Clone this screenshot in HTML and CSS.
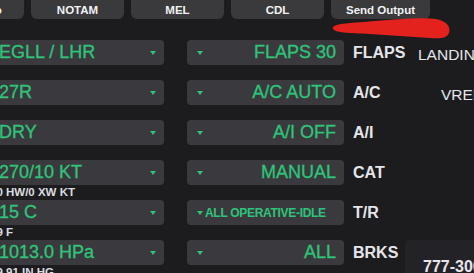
FILE: index.html
```html
<!DOCTYPE html>
<html>

<head>
  <meta charset="utf-8">
  <title>takeoff setup</title>
  <link rel="stylesheet" href="styles.css">
</head>

<body>
  <div class="toolbar">
    <button class="tab">Scenario</button>
    <button class="tab">NOTAM</button>
    <button class="tab">MEL</button>
    <button class="tab">CDL</button>
    <button class="tab wide">Send Output</button>
  </div>

  <!-- red marker scribble over the screenshot -->
  <svg class="scribble" width="124" height="26" viewBox="0 0 124 26">
    <path d="M3,11 C3,6 25,6 45,4 C70,2 92,0 106,2 C117,4 121,10 119,16 C117,21 110,22 100,21 C80,20 60,18 40,17 C20,16 3,16 3,11 Z" fill="#e3211d"/>
  </svg>

  <div class="main">
    <div class="form">
      <div class="row">
        <div class="cell">
          <div class="field left"><span class="value">EGLL / LHR</span><i class="caret"></i></div>
        </div>
        <div class="field right"><i class="caret"></i><span class="value">FLAPS 30</span></div>
        <span class="label">FLAPS</span>
      </div>
      <div class="row">
        <div class="cell">
          <div class="field left"><span class="value">27R</span><i class="caret"></i></div>
        </div>
        <div class="field right"><i class="caret"></i><span class="value">A/C AUTO</span></div>
        <span class="label">A/C</span>
      </div>
      <div class="row">
        <div class="cell">
          <div class="field left"><span class="value">DRY</span><i class="caret"></i></div>
        </div>
        <div class="field right"><i class="caret"></i><span class="value">A/I OFF</span></div>
        <span class="label">A/I</span>
      </div>
      <div class="row">
        <div class="cell">
          <div class="field left"><span class="value">270/10 KT</span><i class="caret"></i></div>
          <div class="sub">10 HW/0 XW KT</div>
        </div>
        <div class="field right"><i class="caret"></i><span class="value">MANUAL</span></div>
        <span class="label">CAT</span>
      </div>
      <div class="row">
        <div class="cell">
          <div class="field left"><span class="value">15 C</span><i class="caret"></i></div>
          <div class="sub">59 F</div>
        </div>
        <div class="field right small"><i class="caret"></i><span class="value">ALL OPERATIVE-IDLE</span></div>
        <span class="label">T/R</span>
      </div>
      <div class="row">
        <div class="cell">
          <div class="field left"><span class="value">1013.0 HPa</span><i class="caret"></i></div>
          <div class="sub">29.91 IN HG</div>
        </div>
        <div class="field right"><i class="caret"></i><span class="value">ALL</span></div>
        <span class="label">BRKS</span>
      </div>
    </div>

    <div class="side">
      <div class="side-title">LANDING</div>
      <div class="side-item">VREF</div>
      <div class="model">777-300ER</div>
    </div>
  </div>
</body>

</html>
```

FILE: styles.css
```css
html {
  --bg: #1c1c1f;
  --field: #3a3a3e;
  --green: #2fc47a;
  --text: #e6e6ea;
}

body {
  margin: 0;
  width: 474px;
  height: 273px;
  overflow: hidden;
  position: relative;
  background: var(--bg);
  font-family: "Liberation Sans", Arial, sans-serif;
  color: var(--text);
}

.toolbar {
  display: flex;
  gap: 7px;
  margin: -8px 0 0 -69px;
}

.tab {
  flex: 0 0 93px;
  height: 27px;
  box-sizing: border-box;
  padding: 9px 0 0;
  border: 0;
  border-radius: 6px;
  background: #3a3a3d;
  color: #f2f2f4;
  font-family: inherit;
  font-size: 11.5px;
  font-weight: bold;
  line-height: 14px;
  text-align: center;
  white-space: nowrap;
}

.tab.wide {
  flex-basis: 99px;
}

.scribble {
  position: absolute;
  left: 330px;
  top: 17px;
}

.main {
  display: flex;
  height: 254px;
}

.form {
  flex: none;
  width: 405px;
  padding-top: 21px;
}

.row {
  display: flex;
  align-items: flex-start;
  height: 40px;
}

.cell {
  width: 176px;
  margin-left: -12px;
}

.field {
  display: flex;
  align-items: center;
  justify-content: space-between;
  height: 25px;
  box-sizing: border-box;
  border-radius: 4px;
  background: var(--field);
  color: var(--green);
  font-size: 18px;
  -webkit-text-stroke: 0.3px var(--green);
  white-space: nowrap;
}

.field.left {
  padding: 0 8px 0 11px;
}

.field.right {
  width: 157px;
  margin-left: 23px;
  padding: 0 8px 0 10px;
}

.field.small {
  justify-content: flex-start;
  gap: 2px;
  font-size: 12px;
  font-weight: bold;
  letter-spacing: -0.3px;
  -webkit-text-stroke: 0;
}

.caret {
  width: 0;
  height: 0;
  border-left: 3.5px solid transparent;
  border-right: 3.5px solid transparent;
  border-top: 4.5px solid var(--green);
}

.sub {
  padding-left: 2px;
  font-size: 11.5px;
  font-weight: bold;
  line-height: 14px;
  color: #dcdce0;
  white-space: nowrap;
}

.label {
  width: 52px;
  margin-left: 9px;
  font-size: 16px;
  font-weight: bold;
  line-height: 25px;
  white-space: nowrap;
}

.side {
  flex: none;
  width: 120px;
  display: flex;
  flex-direction: column;
  font-size: 15.5px;
  line-height: 20px;
  white-space: nowrap;
}

.side-title {
  margin-top: 26px;
  padding-left: 13px;
}

.side-item {
  margin-top: 20px;
  padding-left: 36px;
}

.model {
  margin-top: auto;
  height: 33px;
  box-sizing: border-box;
  padding: 17px 0 0 18px;
  border-top-left-radius: 6px;
  background: #232327;
  font-size: 16px;
  font-weight: bold;
}
```
